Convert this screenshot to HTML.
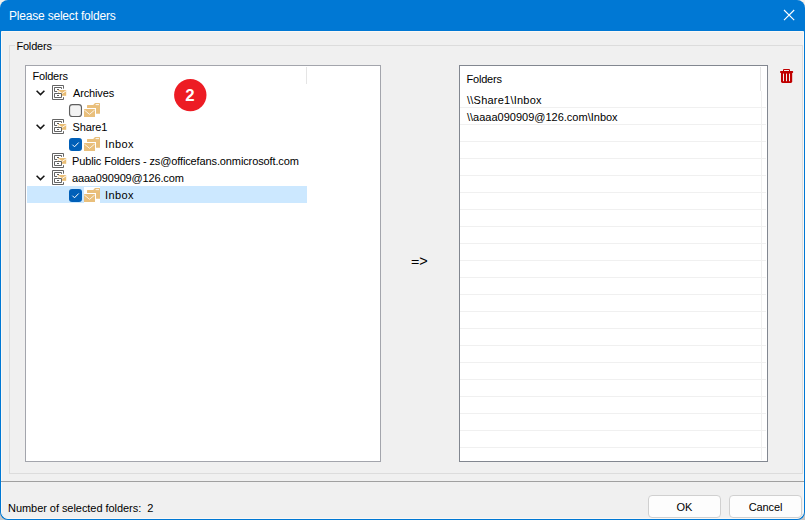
<!DOCTYPE html>
<html lang="en">
<head>
<meta charset="utf-8">
<title>Please select folders</title>
<style>
html,body{margin:0;padding:0;}
body{width:805px;height:520px;overflow:hidden;position:relative;
  background:linear-gradient(#f3f1ed 0,#f3f1ed 260px,#c6c6c6 260px,#c6c6c6 520px);
  font-family:"Liberation Sans",sans-serif;font-size:11px;color:#000;}
.abs{position:absolute;}
#win{position:absolute;left:0;top:0;width:805px;height:520px;background:#0078d4;border-radius:8px;overflow:hidden;}
#client{position:absolute;left:1px;top:31px;width:801px;height:486px;background:#f0f0f0;border:1px solid #fbf8f5;border-radius:0 0 7px 7px;}
#title{position:absolute;left:9px;top:9px;font-size:12px;line-height:15px;color:#fff;white-space:nowrap;letter-spacing:-0.2px;}
.t{position:absolute;white-space:nowrap;line-height:13px;height:13px;font-size:11px;}
#grp{position:absolute;left:9px;top:45px;width:792px;height:427px;border:1px solid #dcdcdc;}
#grplbl{position:absolute;left:15px;top:38px;width:37px;height:15px;background:#f0f0f0;}
.box{position:absolute;top:65px;height:395px;background:#fff;border:1px solid #828790;}
#tree{left:25px;width:354px;border-color:#a3a5ac;}
#list{left:459px;width:307px;}
.hl{position:absolute;background:#e5e5e5;width:1px;}
.sel{position:absolute;left:27px;top:186px;width:280px;height:17px;background:#cce8ff;}
.btn{position:absolute;top:495px;width:71px;height:21px;border:1px solid #d0d0d0;border-radius:4px;background:#fdfdfd;}
#sep{position:absolute;left:1px;top:481px;width:803px;height:1px;background:#a0a0a0;}
svg{position:absolute;overflow:visible;}
</style>
</head>
<body>
<div id="win">
  <div id="title">Please select folders</div>
  <svg style="left:784px;top:10px" width="11" height="11" viewBox="0 0 11 11"><path d="M0 0 L10.2 10.2 M10.2 0 L0 10.2" stroke="#fff" stroke-width="1.1" fill="none"/></svg>
  <div id="client"></div>
</div>

<div id="grp"></div>
<div id="grplbl"></div>
<div class="t" style="left:16.4px;top:40px;letter-spacing:-0.18px">Folders</div>

<div class="box" id="tree"></div>
<div class="box" id="list"></div>

<!-- tree header -->
<div class="hl" style="left:306px;top:67px;height:17px"></div>
<div class="t" style="left:32.5px;top:70px;letter-spacing:-0.2px">Folders</div>

<!-- selection -->
<div class="sel"></div>
<div class="abs" style="left:84px;top:187px;width:16px;height:16px;background:#fff"></div>

<!-- tree rows text -->
<div class="t" style="left:73px;top:87px;letter-spacing:-0.15px">Archives</div>
<div class="t" style="left:72.5px;top:121px;letter-spacing:-0.12px">Share1</div>
<div class="t" style="left:105px;top:138px;letter-spacing:0.4px">Inbox</div>
<div class="t" style="left:72px;top:155px;letter-spacing:-0.12px">Public Folders - zs@officefans.onmicrosoft.com</div>
<div class="t" style="left:72px;top:172px;letter-spacing:-0.16px">aaaa090909@126.com</div>
<div class="t" style="left:105px;top:189px;letter-spacing:0.4px">Inbox</div>

<!-- icons -->
<svg width="805" height="520" viewBox="0 0 805 520" style="left:0;top:0;pointer-events:none">
  <defs>
    <g id="chev"><path d="M36.6 90.8 L40.5 94.6 L44.4 90.8" fill="none" stroke="#151515" stroke-width="1.55"/></g>
    <g id="cab">
      <path d="M63.5 88.7 V85.5 H52.5 V99.5 H63.5 V97.2" fill="none" stroke="#5c5c5c" stroke-width="0.95"/>
      <path d="M61.5 88.9 V87.5 H54.5 V91.5 H57.2" fill="none" stroke="#5c5c5c" stroke-width="0.95"/>
      <rect x="58" y="90" width="8.2" height="5.8" fill="#e9bd75"/>
      <path d="M57.9 91 L61.8 93.6 H57.9 Z" fill="#fff"/>
      <rect x="58" y="92" width="0.9" height="0.8" fill="#ecc583"/>
      <path d="M57.9 90.7 L62.1 93.5 L66.3 90.7" fill="none" stroke="#fff" stroke-width="0.9"/>
      <path d="M54.5 93.5 H61.5 V97.5 H54.5 Z" fill="#fff" stroke="#5c5c5c" stroke-width="0.95"/>
      <path d="M57 89.5 H59 M57 95.5 H59" stroke="#5c5c5c" stroke-width="1"/>
    </g>
    <g id="fld">
      <path d="M87 105.6 Q87 105 87.6 105 H93.2 L95 103 H99.4 Q100 103 100 103.6 V113.8 H96 V108 H87 Z" fill="#e9bf7b"/>
      <rect x="95.6" y="104.2" width="3.4" height="0.9" fill="#fff"/>
      <rect x="84" y="109" width="11" height="8" fill="#e9bf7b"/>
      <path d="M84.3 110 L89.5 114.3 L94.7 110" fill="none" stroke="#fff" stroke-width="0.8"/>
    </g>
    <g id="cb0"><rect x="69.55" y="104.55" width="11.9" height="11.9" rx="2.8" ry="2.8" fill="#f3f3f3" stroke="#5e5e5e" stroke-width="1.15"/></g>
    <g id="cb1"><rect x="69" y="104" width="13" height="13" rx="3" ry="3" fill="#005fb8"/><path d="M72.4 110.7 L74.5 112.8 L78.7 108.5" fill="none" stroke="#fff" stroke-width="1"/></g>
  </defs>
  <use href="#chev"/><use href="#cab"/>
  <use href="#cb0"/><use href="#fld"/>
  <use href="#chev" y="34"/><use href="#cab" y="34"/>
  <use href="#cb1" y="34"/><use href="#fld" y="34"/>
  <use href="#cab" y="68"/>
  <use href="#chev" y="85"/><use href="#cab" y="85"/>
  <use href="#cb1" y="85"/><use href="#fld" y="85"/>
  <!-- red badge -->
  <circle cx="190.3" cy="95.1" r="16.2" fill="#ed1c24"/>
  <text x="189.8" y="100.95" text-anchor="middle" font-family="Liberation Sans, sans-serif" font-weight="bold" font-size="16.8" fill="#fff">2</text>
  <!-- trash -->
  <g fill="#c00000">
    <path d="M783 71 V70 Q783 69 784 69 H789 Q790 69 790 70 V71 H792.4 Q793.2 71 793.2 72 Q793.2 73 792.4 73 H780.8 Q780 73 780 72 Q780 71 780.8 71 Z"/>
    <path d="M781 73 H792.2 V81.6 Q792.2 83 790.8 83 H782.4 Q781 83 781 81.6 Z"/>
  </g>
  <rect x="784" y="70" width="5" height="1" fill="#f0f0f0"/>
  <rect x="783" y="73.6" width="1" height="7.6" fill="#f0f0f0"/>
  <rect x="786" y="73.6" width="1" height="7.6" fill="#f0f0f0"/>
  <rect x="789" y="73.6" width="1" height="7.6" fill="#f0f0f0"/>
</svg>

<!-- arrow -->
<div class="t" style="left:410.6px;top:256px;transform:scaleX(1.3);transform-origin:0 0">=</div><div class="t" style="left:419.3px;top:252.4px;font-size:14.5px;line-height:18px;height:18px;transform:scaleX(1);transform-origin:0 0">&gt;</div>

<!-- list header + rows -->
<div class="hl" style="left:760px;top:67px;height:24px"></div>
<div class="abs" style="left:761px;top:91px;width:1px;height:369px;background:#f0f0f0"></div>
<div class="t" style="left:466.5px;top:73px;letter-spacing:-0.2px">Folders</div>
<div class="t" style="left:467px;top:94px;letter-spacing:0.23px">\\Share1\Inbox</div>
<div class="t" style="left:467px;top:111px">\\aaaa090909@126.com\Inbox</div>
<div class="abs" style="left:460px;top:91px;width:306px;height:370px;background:repeating-linear-gradient(to bottom,transparent 0,transparent 16px,#f0f0f0 16px,#f0f0f0 17px)"></div>

<!-- bottom -->
<div id="sep"></div>
<div class="t" style="left:8px;top:502px;letter-spacing:-0.05px">Number of selected folders:&nbsp; 2</div>
<div class="btn" style="left:648px"></div>
<div class="btn" style="left:729px"></div>
<div class="t" style="left:648px;top:501px;width:73px;text-align:center">OK</div>
<div class="t" style="left:729px;top:501px;width:73px;text-align:center;letter-spacing:-0.1px">Cancel</div>
</body>
</html>
